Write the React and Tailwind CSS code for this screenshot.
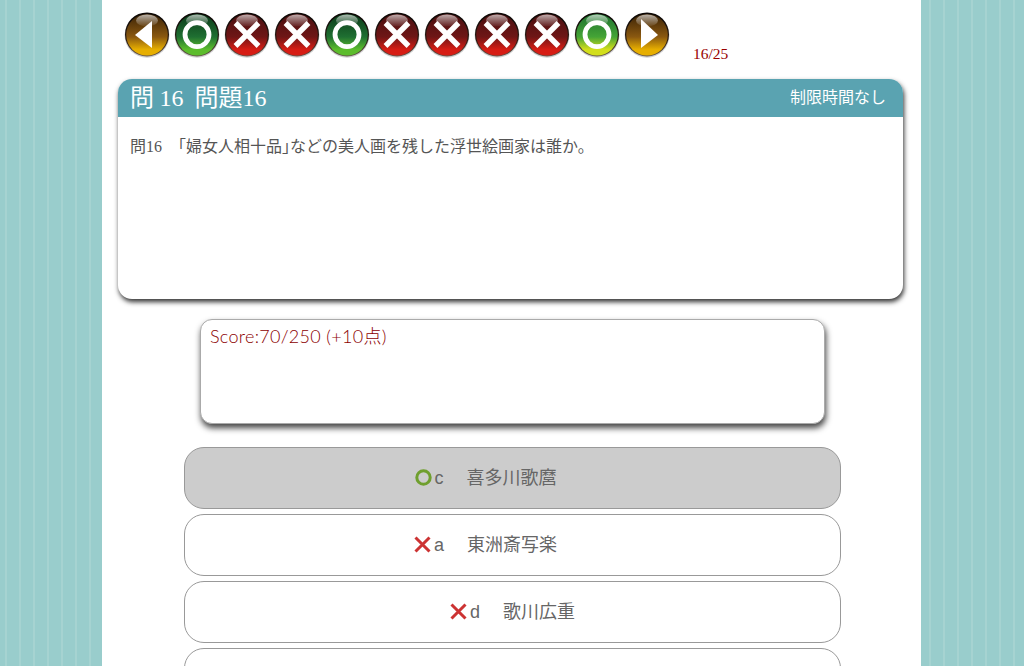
const serif = "font-['Liberation_Serif','Noto_Sans_CJK_JP',serif]";

const palettes = {
  nav: ["#3a2206", "#8a5810", "#e6ae00"],
  ok: ["#0c3a1a", "#1f6f32", "#5cbc2c"],
  ng: ["#4a1010", "#6e1616", "#d61c14"],
  now: ["#1f7030", "#44a436", "#d2de1c"],
};

// round status button, same glossy ball for every state
function Ball({ kind, mark, id }) {
  const [top, mid, bottom] = palettes[kind];
  return (
    <svg width="46" height="46" viewBox="0 0 46 46" className="shrink-0">
      <defs>
        <linearGradient id={`fill${id}`} x1="0" y1="0" x2="0" y2="1">
          <stop offset="0" stopColor={top} />
          <stop offset="0.55" stopColor={mid} />
          <stop offset="0.85" stopColor={bottom} />
          <stop offset="1" stopColor={bottom} />
        </linearGradient>
        <linearGradient id={`rim${id}`} x1="0" y1="0" x2="0" y2="1">
          <stop offset="0" stopColor="#0a0604" />
          <stop offset="0.7" stopColor="#2a1c14" />
          <stop offset="1" stopColor="#6a5a50" />
        </linearGradient>
        <linearGradient id={`gloss${id}`} x1="0" y1="0" x2="0" y2="1">
          <stop offset="0" stopColor="#fff" stopOpacity="0.65" />
          <stop offset="1" stopColor="#fff" stopOpacity="0.05" />
        </linearGradient>
      </defs>
      <circle cx="23" cy="23.4" r="22.4" fill="#d0d0d0" />
      <circle cx="23" cy="22.4" r="22" fill={`url(#rim${id})`} />
      <circle cx="23" cy="22.8" r="20.8" fill={`url(#fill${id})`} />
      {mark === "o" && <circle cx="23" cy="22.6" r="12" fill="none" stroke="#fff" strokeWidth="4.8" />}
      {mark === "x" && (
        <path d="M11.5 11 L34.5 34 M34.5 11 L11.5 34" stroke="#fff" strokeWidth="5.4" fill="none" />
      )}
      {mark === "left" && <path d="M28 9 L11 23 L28 36 Z" fill="#fff" />}
      {mark === "right" && <path d="M17 7 L34 23 L17 36 Z" fill="#fff" />}
      <ellipse cx="23" cy="8.5" rx="11" ry="6" fill={`url(#gloss${id})`} />
    </svg>
  );
}

function Mark({ ok }) {
  return ok ? (
    <svg width="17" height="17" viewBox="0 0 17 17" className="mb-[1px] shrink-0">
      <circle cx="8.5" cy="8.5" r="6.7" fill="none" stroke="#6f9f2e" strokeWidth="3" />
    </svg>
  ) : (
    <svg width="17" height="17" viewBox="0 0 17 17" className="mb-[1px] shrink-0">
      <path d="M1.5 1.5 L15.5 15.5 M15.5 1.5 L1.5 15.5" stroke="#cc3333" strokeWidth="3" fill="none" />
    </svg>
  );
}

const balls = [
  ["nav", "left"],
  ["ok", "o"],
  ["ng", "x"],
  ["ng", "x"],
  ["ok", "o"],
  ["ng", "x"],
  ["ng", "x"],
  ["ng", "x"],
  ["ng", "x"],
  ["now", "o"],
  ["nav", "right"],
];

// first two sit left of centre in the original page
const choices = [
  { ok: true, label: "c", text: "喜多川歌麿", on: true, shift: "pr-[54px]" },
  { ok: false, label: "a", text: "東洲斎写楽", shift: "pr-[54px]" },
  { ok: false, label: "d", text: "歌川広重", shift: "" },
  { ok: false, label: "b", text: "", shift: "" },
];

export default function App() {
  return (
    <div className="h-[666px] overflow-hidden bg-[#99cdcc] bg-[repeating-linear-gradient(90deg,#99cdcc_0px,#99cdcc_5px,#a6d3d1_5px,#a6d3d1_7px,#99cdcc_7px,#99cdcc_14px)]">
      <div className="ml-[102px] h-full w-[819px] bg-white">
        <div className="flex items-start pl-[22px] pt-[12px]">
          <div className="flex gap-[4px]">
            {balls.map(([kind, mark], i) => (
              <Ball key={i} id={i} kind={kind} mark={mark} />
            ))}
          </div>
          <span className={`${serif} ml-[23px] mt-[32px] text-[15.5px] leading-[20px] text-[#990000]`}>16/25</span>
        </div>

        <div className="ml-[16px] mt-[15px] h-[220px] w-[785px] overflow-hidden rounded-[14px] bg-white shadow-[1px_3px_5px_#333]">
          <div className={`${serif} flex h-[38px] items-center justify-between bg-[#5aa3b1] pl-[12px] pr-[17px] text-white`}>
            <span className="whitespace-pre text-[24px] leading-[38px] [word-spacing:-0.5px]">問 16  問題16</span>
            <span className="font-['Liberation_Sans','Noto_Sans_CJK_JP',sans-serif] text-[16px]">制限時間なし</span>
          </div>
          <p className={`${serif} pl-[12px] pt-[20px] text-[16px] leading-[20px] text-[#555]`}>
            問16　<span className="[font-feature-settings:'halt']">「</span>婦女人相十品
            <span className="[font-feature-settings:'halt']">」</span>などの美人画を残した浮世絵画家は誰か。
          </p>
        </div>

        <div className="ml-[98px] mt-[20px] h-[105px] w-[625px] rounded-[12px] border border-[#aaa] bg-white pl-[9px] pt-[5px] shadow-[1px_4px_6px_#444]">
          <span className="font-['Lato','Noto_Sans_CJK_JP',sans-serif] text-[18px] font-light leading-[22px] tracking-[0.3px] text-[#8b0000]">
            Score:70/250 (+10点)
          </span>
        </div>

        <div className="ml-[82px] mt-[23px] flex w-[657px] flex-col gap-[5px]">
          {choices.map((c) => (
            <div
              key={c.label}
              className={`flex h-[62px] shrink-0 items-center justify-center rounded-[20px] border border-[#999] text-[18px] text-[#666] font-['Liberation_Sans','Noto_Sans_CJK_JP',sans-serif] ${c.shift} ${
                c.on ? "bg-[#cccccc]" : "bg-white"
              }`}
            >
              {c.text && (
                <>
                  <Mark ok={c.ok} />
                  <span className="ml-[3px] whitespace-pre">{c.label}</span>
                  <span className="ml-[23px]">{c.text}</span>
                </>
              )}
            </div>
          ))}
        </div>
      </div>
    </div>
  );
}
